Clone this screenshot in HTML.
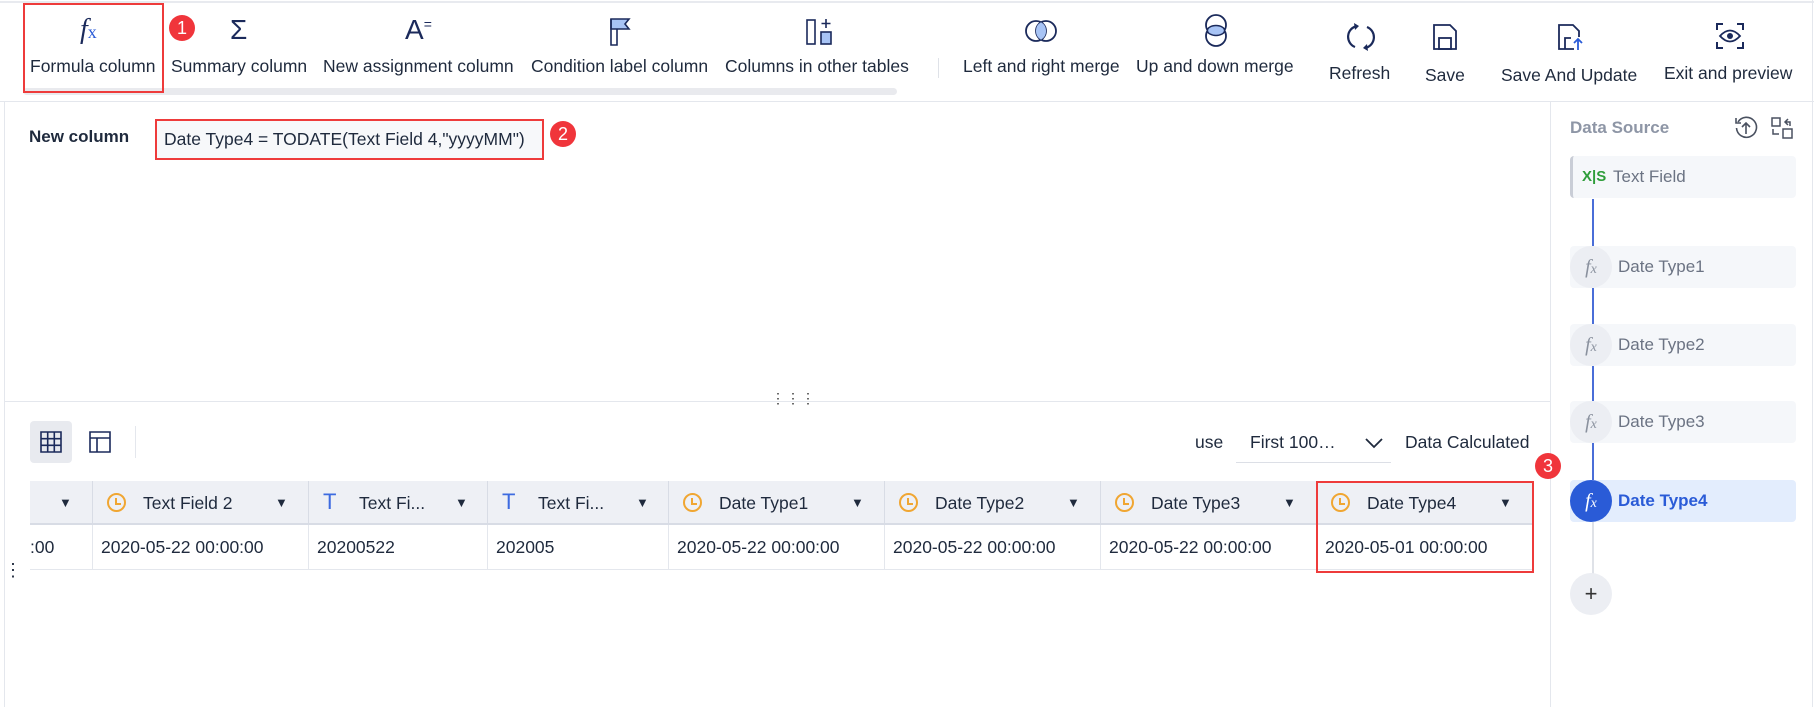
<!DOCTYPE html>
<html><head><meta charset="utf-8"><style>
*{box-sizing:border-box;margin:0;padding:0}
body{width:1814px;height:707px;position:relative;background:#fff;font-family:"Liberation Sans",Arial,sans-serif;color:#1f2a3d;overflow:hidden}
.a{position:absolute;white-space:nowrap}
.lbl{font-size:17.5px;top:56px}
.ic{position:absolute}
.badge{position:absolute;width:26px;height:26px;border-radius:50%;background:#f0353b;color:#fff;font-size:18px;text-align:center;line-height:26px}
.th{position:absolute;top:481px;height:44px;background:#eef0f5;border-right:1px solid #d8dce5;border-bottom:2px solid #d8dce5}
.td{position:absolute;top:525px;height:45px;border-right:1px solid #e4e7ed;border-bottom:1px solid #e4e7ed;font-size:17.5px;line-height:45px;padding-left:8px}
.tht{position:absolute;top:12px;font-size:17.5px}
.arr{position:absolute;top:14px;font-size:13px;color:#1f2a3d}
.clk{position:absolute;top:12px;width:19px;height:19px;border:2px solid #f0a632;border-radius:50%}
.clk:after{content:"";position:absolute;left:6px;top:3px;width:4px;height:5px;border-left:2px solid #f0a632;border-bottom:2px solid #f0a632}
.T{position:absolute;top:8px;color:#3d6be0;font-size:22px;font-weight:300}
.item{position:absolute;left:1570px;width:226px;height:42px;background:#f5f7fa;border-radius:4px;font-size:17px;color:#6b7383;line-height:42px;padding-left:48px}
.circ{position:absolute;left:1570px;width:42px;height:42px;border-radius:50%;background:#eceef3;color:#8a919e;font-style:italic;font-family:"Liberation Serif",serif;font-size:20px;text-align:center;line-height:42px}
</style></head><body>
<div class="a" style="left:0;top:1px;width:1814px;height:2px;background:#e8eaef"></div>
<div class="a" style="left:0;top:101px;width:1814px;height:1px;background:#e4e7ed"></div>
<div class="a" style="left:4px;top:101px;width:1px;height:606px;background:#e4e7ed"></div>
<div class="a" style="left:1550px;top:101px;width:1px;height:606px;background:#e4e7ed"></div>
<div class="a" style="left:1812px;top:0;width:1px;height:707px;background:#e4e7ed"></div>

<!-- toolbar icons -->
<div class="a" style="left:80px;top:14px;font-family:'Liberation Serif',serif;font-style:italic;font-size:28px;color:#1b2a5b">f<span style="font-size:18px;font-style:normal;color:#2a5bd7">x</span></div>
<div class="a" style="left:230px;top:14px;font-size:28px;color:#1b2a5b">Σ</div>
<div class="a" style="left:405px;top:14px;font-size:28px;color:#1b2a5b">A<span style="font-size:14px;vertical-align:10px">=</span></div>
<svg class="ic" style="left:608px;top:18px" width="26" height="28" viewBox="0 0 26 28"><path d="M3 1h18l-4 5 4 5H3z" fill="#a8c4f5" stroke="#1b2a5b" stroke-width="1.6"/><path d="M3 1v26h6V11" fill="none" stroke="#1b2a5b" stroke-width="1.6"/></svg>
<svg class="ic" style="left:805px;top:16px" width="30" height="30" viewBox="0 0 30 30"><rect x="2" y="4" width="8" height="24" fill="none" stroke="#1b2a5b" stroke-width="1.6"/><rect x="16" y="16" width="10" height="12" fill="#a8c4f5" stroke="#1b2a5b" stroke-width="1.6"/><path d="M21 3v9M16.5 7.5h9" stroke="#1b2a5b" stroke-width="1.6"/></svg>
<svg class="ic" style="left:1025px;top:17px" width="32" height="28" viewBox="0 0 32 28"><circle cx="11" cy="14" r="10" fill="none" stroke="#1b2a5b" stroke-width="1.8"/><circle cx="21" cy="14" r="10" fill="none" stroke="#1b2a5b" stroke-width="1.8"/><path d="M16 5.3a10 10 0 0 1 0 17.4a10 10 0 0 1 0-17.4z" fill="#a8c4f5"/></svg>
<svg class="ic" style="left:1202px;top:14px" width="28" height="34" viewBox="0 0 28 34"><circle cx="14" cy="11" r="10" fill="none" stroke="#1b2a5b" stroke-width="1.8"/><circle cx="14" cy="22" r="10" fill="none" stroke="#1b2a5b" stroke-width="1.8"/><ellipse cx="14" cy="16.5" rx="8.6" ry="5" fill="#a8c4f5" stroke="#1b2a5b" stroke-width="1.5"/></svg>
<svg class="ic" style="left:1347px;top:22px" width="28" height="30" viewBox="0 0 28 30"><path d="M10 4A11 11 0 0 0 8 25" fill="none" stroke="#1b2a5b" stroke-width="2.2"/><path d="M18 26A11 11 0 0 0 20 5" fill="none" stroke="#1b2a5b" stroke-width="2.2"/><path d="M7 1l5 3-4 4z" fill="#1b2a5b"/><path d="M21 29l-5-3 4-4z" fill="#1b2a5b"/></svg>
<svg class="ic" style="left:1432px;top:23px" width="26" height="28" viewBox="0 0 26 28"><path d="M2 2h16l6 6v18H2z" fill="none" stroke="#1b2a5b" stroke-width="1.8"/><rect x="7" y="15" width="12" height="11" fill="none" stroke="#1b2a5b" stroke-width="1.8"/></svg>
<svg class="ic" style="left:1557px;top:23px" width="28" height="28" viewBox="0 0 28 28"><path d="M17 26H2V2h14l6 6v6" fill="none" stroke="#1b2a5b" stroke-width="1.8"/><path d="M8 26V15h6" fill="none" stroke="#1b2a5b" stroke-width="1.8"/><path d="M21 27V16M17 20l4-4 4 4" fill="none" stroke="#2a5bd7" stroke-width="1.8"/></svg>
<svg class="ic" style="left:1715px;top:22px" width="30" height="28" viewBox="0 0 30 28"><path d="M2 8V2h6M22 2h6v6M28 20v6h-6M8 26H2v-6" fill="none" stroke="#1b2a5b" stroke-width="2"/><path d="M5 14q10-11 20 0q-10 11-20 0z" fill="none" stroke="#1b2a5b" stroke-width="1.8"/><circle cx="15" cy="14" r="3" fill="#1b2a5b"/></svg>

<div class="a lbl" style="left:30px">Formula column</div>
<div class="a lbl" style="left:171px">Summary column</div>
<div class="a lbl" style="left:323px">New assignment column</div>
<div class="a lbl" style="left:531px">Condition label column</div>
<div class="a lbl" style="left:725px">Columns in other tables</div>
<div class="a" style="left:938px;top:58px;width:1px;height:20px;background:#dfe2e8"></div>
<div class="a lbl" style="left:963px">Left and right merge</div>
<div class="a lbl" style="left:1136px">Up and down merge</div>
<div class="a lbl" style="left:1329px;top:63px">Refresh</div>
<div class="a lbl" style="left:1425px;top:65px">Save</div>
<div class="a lbl" style="left:1501px;top:65px">Save And Update</div>
<div class="a lbl" style="left:1664px;top:63px">Exit and preview</div>
<div class="a" style="left:23px;top:88px;width:874px;height:7px;border-radius:4px;background:#e9eaee"></div>
<div class="a" style="left:23px;top:3px;width:141px;height:90px;border:2px solid #ee3b3b"></div>
<div class="badge" style="left:169px;top:15px">1</div>

<!-- formula -->
<div class="a" style="left:29px;top:127px;font-size:17px;font-weight:bold">New column</div>
<div class="a" style="left:155px;top:119px;width:389px;height:41px;border:2px solid #ee3b3b;background:#f7f8fa;font-size:17.5px;line-height:37px;padding-left:7px">Date Type4 = TODATE(Text Field 4,"yyyyMM")</div>
<div class="badge" style="left:550px;top:121px">2</div>

<div class="a" style="left:5px;top:401px;width:1545px;height:1px;background:#e4e7ed"></div>
<div class="a" style="left:771px;top:390px;font-size:14px;letter-spacing:1px;color:#333">⋮⋮⋮</div>

<!-- grid toolbar -->
<div class="a" style="left:30px;top:421px;width:42px;height:42px;border-radius:4px;background:#e8eaef"></div>
<svg class="ic" style="left:40px;top:431px" width="22" height="22" viewBox="0 0 22 22"><path d="M1 1h20v20H1zM1 7.7h20M1 14.3h20M7.7 1v20M14.3 1v20" fill="none" stroke="#1b2a5b" stroke-width="1.6"/></svg>
<svg class="ic" style="left:89px;top:431px" width="22" height="22" viewBox="0 0 22 22"><path d="M1 1h20v20H1zM1 7h20M8 7v14" fill="none" stroke="#1b2a5b" stroke-width="1.6"/></svg>
<div class="a" style="left:135px;top:426px;width:1px;height:32px;background:#e4e7ed"></div>
<div class="a" style="left:1195px;top:432px;font-size:17.5px">use</div>
<div class="a" style="left:1250px;top:432px;font-size:17.5px">First 100…</div>
<svg class="ic" style="left:1365px;top:437px" width="18" height="12" viewBox="0 0 18 12"><path d="M1 2l8 8 8-8" fill="none" stroke="#1f2a3d" stroke-width="1.8"/></svg>
<div class="a" style="left:1236px;top:462px;width:155px;height:1px;background:#dcdfe6"></div>
<div class="a" style="left:1405px;top:432px;font-size:17.5px">Data Calculated</div>

<!-- table -->
<div class="th" style="left:30px;width:63px"><span class="arr" style="left:29px">▼</span></div>
<div class="th" style="left:93px;width:216px"><span class="clk" style="left:14px"></span><span class="tht" style="left:50px">Text Field 2</span><span class="arr" style="left:182px">▼</span></div>
<div class="th" style="left:309px;width:179px"><span class="T" style="left:14px">T</span><span class="tht" style="left:50px">Text Fi...</span><span class="arr" style="left:146px">▼</span></div>
<div class="th" style="left:488px;width:181px"><span class="T" style="left:14px">T</span><span class="tht" style="left:50px">Text Fi...</span><span class="arr" style="left:148px">▼</span></div>
<div class="th" style="left:669px;width:216px"><span class="clk" style="left:14px"></span><span class="tht" style="left:50px">Date Type1</span><span class="arr" style="left:182px">▼</span></div>
<div class="th" style="left:885px;width:216px"><span class="clk" style="left:14px"></span><span class="tht" style="left:50px">Date Type2</span><span class="arr" style="left:182px">▼</span></div>
<div class="th" style="left:1101px;width:216px"><span class="clk" style="left:14px"></span><span class="tht" style="left:50px">Date Type3</span><span class="arr" style="left:182px">▼</span></div>
<div class="th" style="left:1317px;width:216px;border-right:none"><span class="clk" style="left:14px"></span><span class="tht" style="left:50px">Date Type4</span><span class="arr" style="left:182px">▼</span></div>
<div class="td" style="left:30px;width:63px;padding-left:0">:00</div>
<div class="td" style="left:93px;width:216px">2020-05-22 00:00:00</div>
<div class="td" style="left:309px;width:179px">20200522</div>
<div class="td" style="left:488px;width:181px">202005</div>
<div class="td" style="left:669px;width:216px">2020-05-22 00:00:00</div>
<div class="td" style="left:885px;width:216px">2020-05-22 00:00:00</div>
<div class="td" style="left:1101px;width:216px">2020-05-22 00:00:00</div>
<div class="td" style="left:1317px;width:216px;border-right:none">2020-05-01 00:00:00</div>
<div class="a" style="left:1316px;top:481px;width:218px;height:92px;border:2px solid #ee3b3b"></div>
<div class="badge" style="left:1535px;top:453px">3</div>
<div class="a" style="left:4px;top:560px;font-size:18px">⋮</div>

<!-- right panel -->
<div class="a" style="left:1570px;top:118px;font-size:17px;font-weight:bold;color:#8e96a6">Data Source</div>
<svg class="ic" style="left:1734px;top:116px" width="24" height="24" viewBox="0 0 24 24"><path d="M4 6A10 10 0 1 1 2.5 12" fill="none" stroke="#4a5160" stroke-width="1.6"/><path d="M2 2v5h5" fill="none" stroke="#4a5160" stroke-width="1.6"/><path d="M12 18V7M8 11l4-4 4 4" fill="none" stroke="#4a5160" stroke-width="1.6"/></svg>
<svg class="ic" style="left:1771px;top:117px" width="22" height="22" viewBox="0 0 22 22"><rect x="1" y="1" width="8" height="8" fill="none" stroke="#4a5160" stroke-width="1.5"/><rect x="12" y="12" width="9" height="9" fill="none" stroke="#4a5160" stroke-width="1.5"/><path d="M14 5h5v4M17 2l-3 3 3 3M8 17H2v-5" fill="none" stroke="#4a5160" stroke-width="1.5"/></svg>
<div class="a" style="left:1592px;top:199px;width:2px;height:322px;background:#4a6ed8"></div>
<div class="a" style="left:1592px;top:521px;width:2px;height:55px;background:#dfe2e8"></div>
<div class="item" style="top:156px;border-left:3px solid #c9cdd6;padding-left:40px"><span style="color:#2e9d3a;font-weight:bold;position:absolute;left:9px;font-size:15px">X|S</span>Text Field</div>
<div class="item" style="top:246px">Date Type1</div><div class="circ" style="top:246px">f<span style="font-size:14px">x</span></div>
<div class="item" style="top:324px">Date Type2</div><div class="circ" style="top:324px">f<span style="font-size:14px">x</span></div>
<div class="item" style="top:401px">Date Type3</div><div class="circ" style="top:401px">f<span style="font-size:14px">x</span></div>
<div class="item" style="top:480px;background:#e3edfd;color:#2a5bd7;font-weight:bold">Date Type4</div><div class="circ" style="top:480px;background:#2a5bd7;color:#fff">f<span style="font-size:14px">x</span></div>
<div class="circ" style="top:573px;font-style:normal;font-family:'Liberation Sans',sans-serif;color:#333;font-size:22px">+</div>
</body></html>
